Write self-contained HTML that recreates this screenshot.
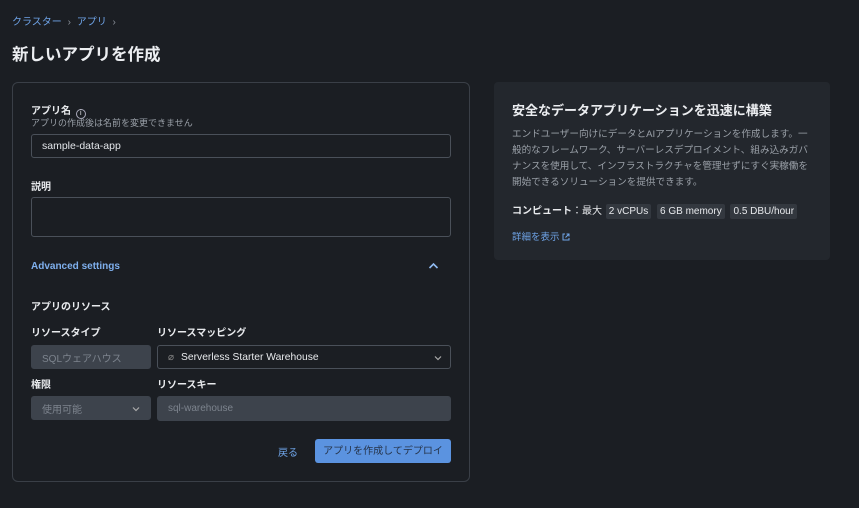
<!DOCTYPE html>
<html><head><meta charset="utf-8"><style>
*{box-sizing:border-box;margin:0;padding:0}
body{width:859px;height:508px;background:#1b1e23;font-family:"Liberation Sans","Noto Sans CJK JP",sans-serif;color:#e3e6ea;position:relative;overflow:hidden}
.a{position:absolute;white-space:nowrap}
.lbl{font-size:10px;font-weight:bold;color:#e8eaed}
.inp{position:absolute;border:1px solid #4a5059;border-radius:3px;background:#1b1e23;font-size:10px;padding-left:10px;display:flex;align-items:center}
.dis{background:#3d434c;border-color:#3d434c;color:#7d848e}
</style></head><body>
<div class="a" style="left:12px;top:13px;font-size:10px;color:#6fa4e8">クラスター <span style="color:#8a9099;margin:0 3px">›</span> アプリ <span style="color:#8a9099;margin-left:3px">›</span></div>
<div class="a" style="left:12px;top:41px;font-size:16.5px;font-weight:bold;color:#eceef1">新しいアプリを作成</div>

<div class="a" style="left:12px;top:82px;width:458px;height:400px;border:1px solid #3a3f47;border-radius:6px"></div>
<div class="a lbl" style="left:31px;top:102px">アプリ名 <span style="display:inline-block;width:10px;height:10px;border:1px solid #aab;border-radius:50%;font-size:7px;text-align:center;line-height:8px;vertical-align:-1px;font-weight:normal;margin-left:2px">i</span></div>
<div class="a" style="left:31px;top:116px;font-size:9px;color:#9aa0a8">アプリの作成後は名前を変更できません</div>
<div class="inp" style="left:31px;top:134px;width:420px;height:24px;color:#e3e6ea;font-size:10.5px">sample-data-app</div>
<div class="a lbl" style="left:31px;top:178px">説明</div>
<div class="inp" style="left:31px;top:197px;width:420px;height:40px"></div>
<div class="a" style="left:31px;top:261px;font-size:10px;font-weight:bold;color:#7fb0ee">Advanced settings</div>
<svg class="a" style="left:428px;top:262px" width="11" height="8" viewBox="0 0 11 8"><path d="M1.5 6L5.5 2L9.5 6" stroke="#8fbaf0" stroke-width="1.6" fill="none"/></svg>
<div class="a lbl" style="left:31px;top:298px">アプリのリソース</div>
<div class="a lbl" style="left:31px;top:324px">リソースタイプ</div>
<div class="a lbl" style="left:157px;top:324px">リソースマッピング</div>
<div class="inp dis" style="left:31px;top:345px;width:120px;height:24px">SQLウェアハウス</div>
<div class="inp" style="left:157px;top:345px;width:294px;height:24px;color:#e8eaed;font-size:10.3px"><span style="color:#888;margin-right:7px;font-size:10px">⌀</span>Serverless Starter Warehouse
<svg style="position:absolute;right:8px;top:9px" width="8" height="6"><path d="M1 1.5L4 4.5L7 1.5" stroke="#aaa" stroke-width="1.2" fill="none"/></svg></div>
<div class="a lbl" style="left:31px;top:376px">権限</div>
<div class="a lbl" style="left:157px;top:376px">リソースキー</div>
<div class="inp dis" style="left:31px;top:396px;width:120px;height:24px">使用可能
<svg style="position:absolute;right:10px;top:9px" width="8" height="6"><path d="M1 1.5L4 4.5L7 1.5" stroke="#aaa" stroke-width="1.2" fill="none"/></svg></div>
<div class="inp dis" style="left:157px;top:396px;width:294px;height:25px">sql-warehouse</div>
<div class="a" style="left:278px;top:444px;font-size:10px;color:#6fa4e8">戻る</div>
<div class="a" style="left:315px;top:439px;width:136px;height:24px;background:#5b93e0;border-radius:3px;font-size:10px;color:#26344a;text-align:center;line-height:25px">アプリを作成してデプロイ</div>

<div class="a" style="left:494px;top:82px;width:336px;height:178px;background:#23272d;border-radius:4px"></div>
<div class="a" style="left:512px;top:100px;font-size:13px;font-weight:bold;color:#eceef1">安全なデータアプリケーションを迅速に構築</div>
<div class="a" style="left:512px;top:127px;width:302px;white-space:normal;font-size:9.6px;line-height:16px;color:#9aa0a8">エンドユーザー向けにデータとAIアプリケーションを作成します。一般的なフレームワーク、サーバーレスデプロイメント、組み込みガバナンスを使用して、インフラストラクチャを管理せずにすぐ実稼働を開始できるソリューションを提供できます。</div>
<div class="a" style="left:512px;top:202px;font-size:10px;color:#e8eaed"><b>コンピュート</b>：最大
<span style="background:#33383f;padding:2px 3px;border-radius:2px;margin-left:1px">2 vCPUs</span>
<span style="background:#33383f;padding:2px 3px;border-radius:2px;margin-left:3px">6 GB memory</span>
<span style="background:#33383f;padding:2px 3px;border-radius:2px;margin-left:3px">0.5 DBU/hour</span></div>
<div class="a" style="left:512px;top:229px;font-size:9.5px;color:#6fa4e8">詳細を表示 <svg width="8" height="8" viewBox="0 0 8 8" style="vertical-align:-1px"><path d="M3 1H1V7H7V5M4.5 1H7V3.5M7 1L3.5 4.5" stroke="#6fa4e8" fill="none"/></svg></div>
</body></html>
